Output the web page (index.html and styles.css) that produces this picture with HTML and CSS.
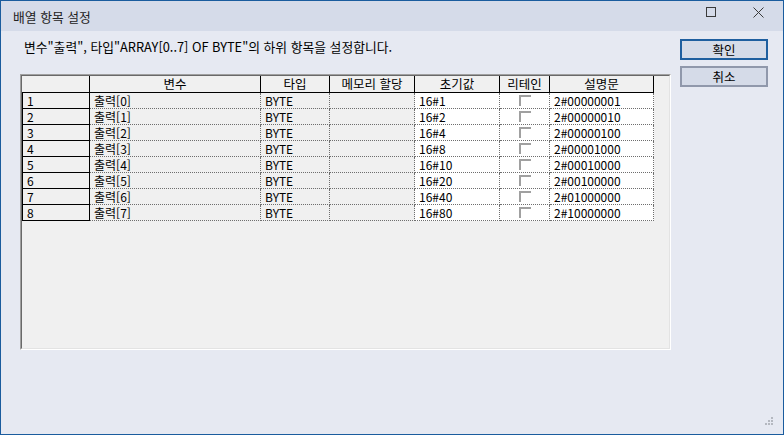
FILE: index.html
```html
<!DOCTYPE html>
<html lang="ko">
<head>
<meta charset="utf-8">
<title>배열 항목 설정</title>
<link rel="stylesheet" href="styles.css">
</head>
<body>
<div class="window">
  <div class="titlebar">
    <span class="title">배열 항목 설정</span>
    <div class="controls">
      <svg class="ctl" width="10" height="10" viewBox="0 0 10 10"><rect x="0.5" y="0.5" width="9" height="9" fill="none" stroke="#3a3a3a" stroke-width="1"/></svg>
      <svg class="ctl" width="11" height="11" viewBox="0 0 11 11"><path d="M0.5 0.5 L10.5 10.5 M10.5 0.5 L0.5 10.5" fill="none" stroke="#3a3a3a" stroke-width="1"/></svg>
    </div>
  </div>
  <div class="body">
    <div class="main">
      <p class="instr">변수"출력", 타입"ARRAY[0..7] OF BYTE"의 하위 항목을 설정합니다.</p>
      <div class="grid-frame">
        <div class="grid-inner">
          <div class="grid">
            <div class="hd"></div>
            <div class="hd">변수</div>
            <div class="hd">타입</div>
            <div class="hd">메모리 할당</div>
            <div class="hd">초기값</div>
            <div class="hd">리테인</div>
            <div class="hd">설명문</div>

            <div class="rh">1</div><div class="c">출력[0]</div><div class="c">BYTE</div><div class="c"></div><div class="c w">16#1</div><div class="c w ck"><span class="chk"></span></div><div class="c w">2#00000001</div>
            <div class="rh">2</div><div class="c">출력[1]</div><div class="c">BYTE</div><div class="c"></div><div class="c w">16#2</div><div class="c w ck"><span class="chk"></span></div><div class="c w">2#00000010</div>
            <div class="rh">3</div><div class="c">출력[2]</div><div class="c">BYTE</div><div class="c"></div><div class="c w">16#4</div><div class="c w ck"><span class="chk"></span></div><div class="c w">2#00000100</div>
            <div class="rh">4</div><div class="c">출력[3]</div><div class="c">BYTE</div><div class="c"></div><div class="c w">16#8</div><div class="c w ck"><span class="chk"></span></div><div class="c w">2#00001000</div>
            <div class="rh">5</div><div class="c">출력[4]</div><div class="c">BYTE</div><div class="c"></div><div class="c w">16#10</div><div class="c w ck"><span class="chk"></span></div><div class="c w">2#00010000</div>
            <div class="rh">6</div><div class="c">출력[5]</div><div class="c">BYTE</div><div class="c"></div><div class="c w">16#20</div><div class="c w ck"><span class="chk"></span></div><div class="c w">2#00100000</div>
            <div class="rh">7</div><div class="c">출력[6]</div><div class="c">BYTE</div><div class="c"></div><div class="c w">16#40</div><div class="c w ck"><span class="chk"></span></div><div class="c w">2#01000000</div>
            <div class="rh">8</div><div class="c">출력[7]</div><div class="c">BYTE</div><div class="c"></div><div class="c w">16#80</div><div class="c w ck"><span class="chk"></span></div><div class="c w">2#10000000</div>
          </div>
        </div>
      </div>
    </div>
    <div class="side">
      <button class="btn btn-default">확인</button>
      <button class="btn">취소</button>
    </div>
  </div>
  <svg class="grip" width="8" height="8" viewBox="0 0 8 8">
    <rect x="6" y="0" width="2" height="2" fill="#b4b8c0"/>
    <rect x="3" y="3" width="2" height="2" fill="#b4b8c0"/>
    <rect x="6" y="3" width="2" height="2" fill="#b4b8c0"/>
    <rect x="0" y="6" width="2" height="2" fill="#b4b8c0"/>
    <rect x="3" y="6" width="2" height="2" fill="#b4b8c0"/>
    <rect x="6" y="6" width="2" height="2" fill="#b4b8c0"/>
  </svg>
</div>
</body>
</html>
```

FILE: styles.css
```css
* { box-sizing: border-box; }
html, body { margin: 0; padding: 0; }
body {
  font-family: "Noto Sans CJK KR", "Noto Sans", sans-serif;
  font-size: 12px;
  color: #000;
  background: #e6e9f2;
}
.window {
  position: relative;
  width: 784px;
  height: 435px;
  border: 1px solid #1a5c9e;
  background: #e6e9f2;
  display: flex;
  flex-direction: column;
}
.titlebar {
  height: 30px;
  background: #d5dbe9;
  display: flex;
  justify-content: space-between;
  align-items: flex-start;
  padding: 0 19px 0 12px;
}
.title {
  margin-top: 8px;
  line-height: 16px;
  font-size: 12.8px;
  color: #222;
}
.controls {
  display: flex;
  gap: 37px;
  margin-top: 6px;
}
.ctl { display: block; }
.body {
  flex: 1;
  display: flex;
  padding: 8px 0 0 19px;
}
.main {
  width: 651px;
  display: flex;
  flex-direction: column;
}
.instr {
  margin: 0 0 19px 4px;
  line-height: 16px;
  font-size: 12.8px;
  white-space: nowrap;
}
.grid-frame {
  width: 651px;
  height: 276px;
  border-top: 1px solid #a0a0a0;
  border-left: 1px solid #a0a0a0;
  border-right: 1px solid #ffffff;
  border-bottom: 1px solid #ffffff;
}
.grid-inner {
  height: 100%;
  border-top: 1px solid #696969;
  border-left: 1px solid #696969;
  border-right: 1px solid #e3e3e3;
  border-bottom: 1px solid #e3e3e3;
  background: #f0f0f0;
}
.grid {
  display: grid;
  grid-template-columns: 68px 171px 69px 85px 85px 50px 104px;
  grid-template-rows: 17px repeat(8, 16px);
  width: 632px;
  font-size: 12px;
}
.hd {
  border-right: 1px solid #000;
  border-bottom: 1px solid #000;
  text-align: center;
  line-height: 16px;
  white-space: nowrap;
  font-size: 12.5px;
}
.rh {
  border-left: 1px solid #000;
  border-right: 1px solid #000;
  border-bottom: 1px solid #000;
  padding-left: 4px;
  line-height: 15px;
}
.c {
  border-right: 1px dotted #6e6e6e;
  border-bottom: 1px dotted #6e6e6e;
  padding-left: 4px;
  line-height: 15px;
  white-space: nowrap;
  background: #f0f0f0;
}
.c.w { background: #ffffff; }
.ck {
  display: flex;
  justify-content: center;
  align-items: center;
  padding-left: 0;
}
.chk {
  display: block;
  width: 12px;
  height: 11px;
  border-top: 2px solid #a0a0a0;
  border-left: 2px solid #a0a0a0;
  background: #ffffff;
}
.side {
  margin-left: 9px;
  width: 88px;
  display: flex;
  flex-direction: column;
  gap: 6px;
}
.btn {
  width: 88px;
  height: 21px;
  padding: 0;
  margin: 0;
  font-family: "Noto Sans CJK KR", "Noto Sans", sans-serif;
  font-size: 12.5px;
  line-height: 16px;
  color: #000;
  background: #d5dbe8;
  border: 2px solid #9098ab;
}
.btn-default { border-color: #1f5f9f; }
.grip {
  position: absolute;
  right: 10px;
  bottom: 9px;
  display: block;
}
```
